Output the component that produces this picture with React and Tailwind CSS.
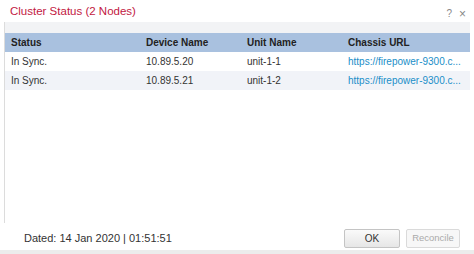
import React from 'react';

const rows = [
  { status: 'In Sync.', device: '10.89.5.20', unit: 'unit-1-1', url: 'https://firepower-9300.c...' },
  { status: 'In Sync.', device: '10.89.5.21', unit: 'unit-1-2', url: 'https://firepower-9300.c...' },
];

const cols = 'grid grid-cols-[135px_101px_101px_1fr]';

export default function App() {
  return (
    <div
      className="w-[474px] h-[254px] bg-white flex flex-col text-[#333]"
      style={{ fontFamily: '"Liberation Sans", Arial, sans-serif' }}
    >
      {/* title bar */}
      <div className="h-[22px] flex items-center justify-between pl-[10px] pr-[8px]">
        <span className="text-[11.5px] text-[#c2183f] leading-none pt-[1px]">Cluster Status (2 Nodes)</span>
        <div className="flex items-center gap-[7px] text-[#888] text-[10px] pt-[5px]">
          <span>?</span>
          <span className="text-[12px]">×</span>
        </div>
      </div>

      {/* body */}
      <div className="flex-1 mx-[4px] flex flex-col border-l border-[#dcdcdc] mb-[4px]">
        <div className="h-[11px] bg-[#f2f3f5]" />
        <div className={`${cols} h-[19px] items-center bg-[#a9c1df] text-[10px] font-bold text-[#222]`}>
          <div className="pl-[6px]">Status</div>
          <div className="pl-[6px]">Device Name</div>
          <div className="pl-[6px]">Unit Name</div>
          <div className="pl-[6px]">Chassis URL</div>
        </div>
        {rows.map((r, i) => (
          <div
            key={i}
            className={`${cols} h-[19px] items-center text-[10px] text-[#333] ${i % 2 ? 'bg-[#f1f3f8]' : 'bg-white'}`}
          >
            <div className="pl-[6px]">{r.status}</div>
            <div className="pl-[6px]">{r.device}</div>
            <div className="pl-[6px]">{r.unit}</div>
            <div className="pl-[6px] text-[#1a8ec8] whitespace-nowrap overflow-hidden">{r.url}</div>
          </div>
        ))}
      </div>

      {/* footer */}
      <div className="h-[23px] flex items-center justify-between pl-[24px] pr-[14px]">
        <span className="text-[11px] text-[#333]">Dated: 14 Jan 2020 | 01:51:51</span>
        <div className="flex items-center gap-[6px]">
          <button className="w-[56px] h-[19px] border border-[#c4c4c4] rounded-[2px] bg-gradient-to-b from-[#fafafa] to-[#e6e6e6] text-[10px] text-[#333]">
            OK
          </button>
          <button className="w-[54px] h-[19px] border border-[#dadada] rounded-[2px] bg-[#f7f7f7] text-[9.5px] text-[#aaa]">
            Reconcile
          </button>
        </div>
      </div>
      <div className="h-[4px] bg-[#ececec]" />
    </div>
  );
}
